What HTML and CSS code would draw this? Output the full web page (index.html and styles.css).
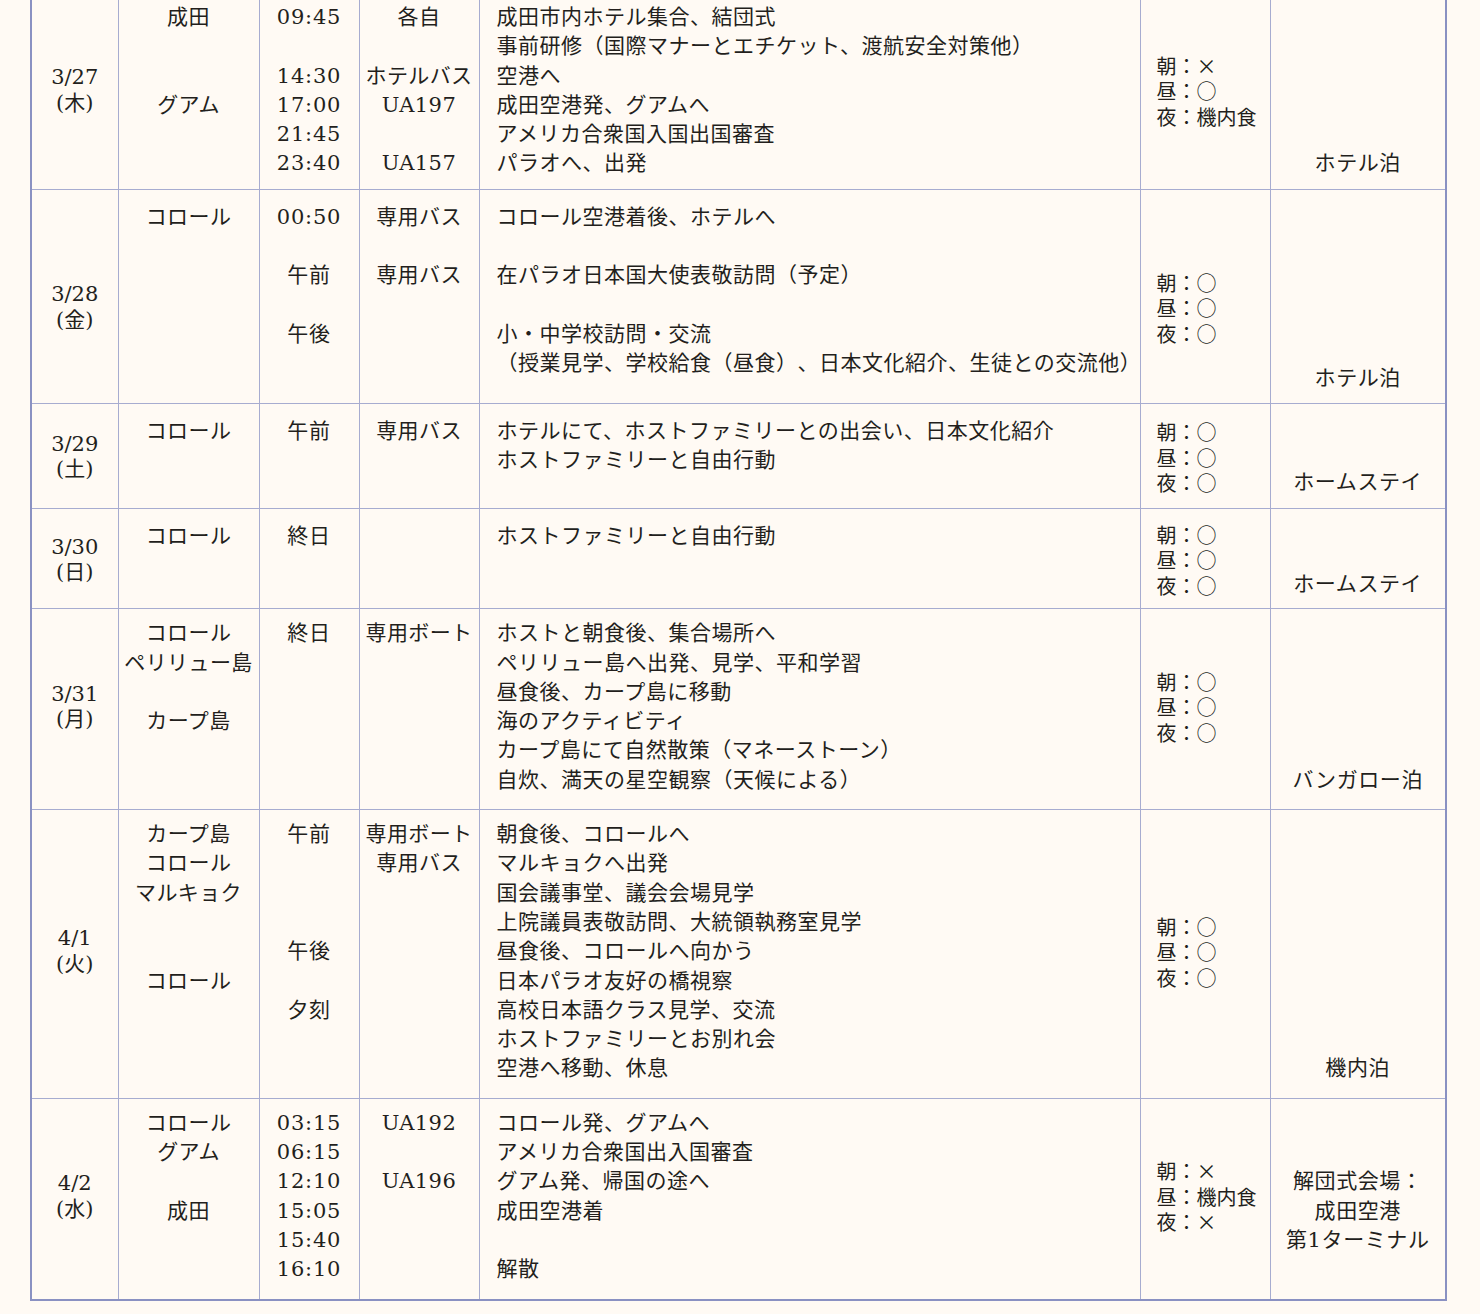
FILE: index.html
```html
<!DOCTYPE html>
<html lang="ja">
<head>
<meta charset="utf-8">
<title>日程表</title>
<link rel="stylesheet" href="styles.css">
</head>
<body>
<table class="schedule">
  <colgroup>
    <col class="c-date">
    <col class="c-place">
    <col class="c-time">
    <col class="c-trans">
    <col class="c-plan">
    <col class="c-meal">
    <col class="c-stay">
  </colgroup>
  <tbody>
    <tr class="row-a first">
      <td class="date">3/27<br>(木)</td>
      <td class="place">成田<br><br><br>グアム</td>
      <td class="time">09:45<br><br>14:30<br>17:00<br>21:45<br>23:40</td>
      <td class="trans">各自<br><br>ホテルバス<br>UA197<br><br>UA157</td>
      <td class="plan">成田市内ホテル集合、結団式<br>事前研修（国際マナーとエチケット、渡航安全対策他）<br>空港へ<br>成田空港発、グアムへ<br>アメリカ合衆国入国出国審査<br>パラオへ、出発</td>
      <td class="meal">朝：×<br>昼：○<br>夜：機内食</td>
      <td class="stay">ホテル泊</td>
    </tr>
    <tr class="row-a tall">
      <td class="date shifted">3/28<br>(金)</td>
      <td class="place">コロール</td>
      <td class="time">00:50<br><br>午前<br><br>午後</td>
      <td class="trans">専用バス<br><br>専用バス</td>
      <td class="plan">コロール空港着後、ホテルへ<br><br>在パラオ日本国大使表敬訪問（予定）<br><br>小・中学校訪問・交流<br>（授業見学、学校給食（昼食）、日本文化紹介、生徒との交流他）</td>
      <td class="meal shifted">朝：○<br>昼：○<br>夜：○</td>
      <td class="stay low">ホテル泊</td>
    </tr>
    <tr class="row-a mid">
      <td class="date">3/29<br>(土)</td>
      <td class="place">コロール</td>
      <td class="time">午前</td>
      <td class="trans">専用バス</td>
      <td class="plan">ホテルにて、ホストファミリーとの出会い、日本文化紹介<br>ホストファミリーと自由行動</td>
      <td class="meal">朝：○<br>昼：○<br>夜：○</td>
      <td class="stay">ホームステイ</td>
    </tr>
    <tr class="row-a">
      <td class="date">3/30<br>(日)</td>
      <td class="place">コロール</td>
      <td class="time">終日</td>
      <td class="trans"></td>
      <td class="plan">ホストファミリーと自由行動</td>
      <td class="meal">朝：○<br>昼：○<br>夜：○</td>
      <td class="stay low">ホームステイ</td>
    </tr>
    <tr class="row-b">
      <td class="date">3/31<br>(月)</td>
      <td class="place">コロール<br>ペリリュー島<br><br>カープ島</td>
      <td class="time">終日</td>
      <td class="trans">専用ボート</td>
      <td class="plan">ホストと朝食後、集合場所へ<br>ペリリュー島へ出発、見学、平和学習<br>昼食後、カープ島に移動<br>海のアクティビティ<br>カープ島にて自然散策（マネーストーン）<br>自炊、満天の星空観察（天候による）</td>
      <td class="meal">朝：○<br>昼：○<br>夜：○</td>
      <td class="stay">バンガロー泊</td>
    </tr>
    <tr class="row-b">
      <td class="date">4/1<br>(火)</td>
      <td class="place">カープ島<br>コロール<br>マルキョク<br><br><br>コロール</td>
      <td class="time">午前<br><br><br><br>午後<br><br>夕刻</td>
      <td class="trans">専用ボート<br>専用バス</td>
      <td class="plan">朝食後、コロールへ<br>マルキョクへ出発<br>国会議事堂、議会会場見学<br>上院議員表敬訪問、大統領執務室見学<br>昼食後、コロールへ向かう<br>日本パラオ友好の橋視察<br>高校日本語クラス見学、交流<br>ホストファミリーとお別れ会<br>空港へ移動、休息</td>
      <td class="meal">朝：○<br>昼：○<br>夜：○</td>
      <td class="stay">機内泊</td>
    </tr>
    <tr class="row-b">
      <td class="date">4/2<br>(水)</td>
      <td class="place">コロール<br>グアム<br><br>成田</td>
      <td class="time">03:15<br>06:15<br>12:10<br>15:05<br>15:40<br>16:10</td>
      <td class="trans">UA192<br><br>UA196</td>
      <td class="plan">コロール発、グアムへ<br>アメリカ合衆国出入国審査<br>グアム発、帰国の途へ<br>成田空港着<br><br>解散</td>
      <td class="meal">朝：×<br>昼：機内食<br>夜：×</td>
      <td class="stay top"><br><br>解団式会場：<br>成田空港<br>第1ターミナル</td>
    </tr>
  </tbody>
</table>
</body>
</html>
```

FILE: styles.css
```css
html, body {
  margin: 0;
  padding: 0;
  background: #fffaf4;
}

body {
  color: #231f1c;
  font-family: "DejaVu Serif", "Noto Sans CJK JP", serif;
  font-size: 21px;
  text-spacing-trim: space-all;
}

.schedule {
  border-collapse: collapse;
  table-layout: fixed;
  width: 1415px;
  margin: -12px 0 0 30px;
  border: 2px solid #8a91c2;
}

.c-date  { width: 87px; }
.c-place { width: 141px; }
.c-time  { width: 100px; }
.c-trans { width: 120px; }
.c-plan  { width: 661px; }
.c-meal  { width: 130px; }
.c-stay  { width: 176px; }

.schedule td {
  border: 1px solid #a7acd0;
  vertical-align: top;
  line-height: 29.3px;
  padding: 13px 4px 10px;
  text-align: center;
  white-space: nowrap;
  letter-spacing: 0.4px;
}

.schedule tr.first td {
  border-top: none;
}

.schedule tr.row-b td {
  padding-top: 10px;
  padding-bottom: 14px;
}

.schedule tr.tall { height: 214px; }
.schedule tr.mid { height: 105px; }

.schedule td.date {
  vertical-align: middle;
  line-height: 25.5px;
  letter-spacing: 0;
}

.schedule td.time {
  letter-spacing: 0.8px;
}

.schedule td.plan {
  text-align: left;
  padding-left: 17px;
  padding-right: 2px;
  letter-spacing: 0.5px;
}

.schedule td.meal {
  text-align: left;
  vertical-align: middle;
  padding-left: 16px;
  font-family: "Noto Sans CJK JP", sans-serif;
  font-size: 20px;
  line-height: 25.5px;
  letter-spacing: 0;
}

.schedule td.shifted {
  padding-top: 33px;
}

.schedule td.stay {
  vertical-align: bottom;
  letter-spacing: 0.6px;
}

.schedule td.stay.low {
  padding-bottom: 9px;
}

.schedule td.stay.top {
  vertical-align: top;
  padding-left: 2px;
  padding-right: 2px;
}
```
